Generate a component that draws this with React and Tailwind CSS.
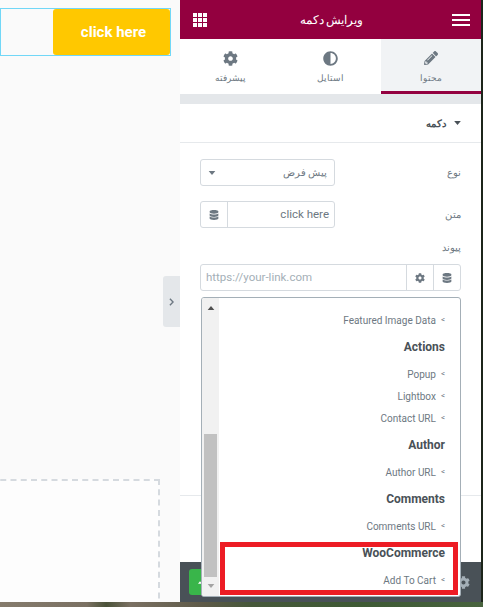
import React from 'react';
import { FaAdjust, FaCog, FaDatabase, FaPencilAlt } from 'react-icons/fa';

const font = { fontFamily: 'Roboto, sans-serif' };

function Tab({ label, active, children }) {
  return (
    <div className={`flex-1 h-[55px] flex flex-col items-center pt-[12px] ${active ? 'bg-[#f1f3f5] border-b-[3px] border-[#93003f]' : 'bg-white'}`}>
      <div className="h-[16px] text-[#6d7882]">{children}</div>
      <span className="mt-[5px] text-[8.5px] leading-[12px] text-[#6d7882]">{label}</span>
    </div>
  );
}

function Item({ children }) {
  return (
    <div className="h-[22px] flex items-center justify-end gap-[5px] text-[10px] text-[#6d7882]">
      <span>{children}</span>
      <span className="text-[8px] leading-none">&lt;</span>
    </div>
  );
}

function Group({ children }) {
  return <div className="h-[32px] flex items-center justify-end text-[12px] font-bold text-[#495157]">{children}</div>;
}

export default function App() {
  return (
    <div className="relative w-[483px] h-[607px] overflow-hidden flex bg-[#1e281c]" style={font}>
      {/* Preview */}
      <div className="w-[180px] h-[602px] shrink-0 bg-[#fafafa] relative overflow-hidden">
        <div className="mt-[8px] h-[48px] w-[171px] border border-[#71d7f7] flex justify-end">
          <div className="w-[117px] h-[46px] pl-[4px] bg-[#ffc800] rounded-[3px] flex items-center justify-center text-white text-[15px] font-bold">click here</div>
        </div>
        <div className="absolute left-[-10px] top-[479px] w-[170px] h-[140px] border-2 border-dashed border-[#d5dadf] bg-[#fdfdfd]" />
      </div>

      {/* Panel */}
      <div className="w-[301px] h-[602px] shrink-0 flex flex-col bg-white shadow-[0_0_8px_rgba(0,0,0,0.15)]">
        <div className="h-[39px] shrink-0 bg-[#93003f] flex items-center justify-between pl-[13px] pr-[11px] text-white">
          <div className="grid grid-cols-3 gap-[1px]">
            {Array.from({ length: 9 }).map((_, i) => <div key={i} className="w-[4px] h-[4px] bg-white" />)}
          </div>
          <span className="text-[12px] ml-[4px]" dir="rtl">ویرایش دکمه</span>
          <div className="flex flex-col gap-[3px]">
            <div className="w-[18px] h-[2px] bg-white" />
            <div className="w-[18px] h-[2px] bg-white" />
            <div className="w-[18px] h-[2px] bg-white" />
          </div>
        </div>
        <div className="flex shrink-0">
          <Tab label="پیشرفته"><FaCog size={15} /></Tab>
          <Tab label="استایل"><FaAdjust size={15} /></Tab>
          <Tab label="محتوا" active><FaPencilAlt size={14} /></Tab>
        </div>
        <div className="h-[10px] shrink-0 bg-[#e4e7ea]" />
        <div className="h-[39px] shrink-0 border-b border-[#e6e9ec] flex items-center justify-end gap-[8px] pr-[20px] text-[10px] font-bold text-[#495157]">
          <span dir="rtl">دکمه</span>
          <svg viewBox="0 0 10 6" className="w-[7px] h-[4px]" fill="currentColor"><path d="M0 0h10L5 6z" /></svg>
        </div>

        <div className="flex-1 px-[20px] pt-[16px]">
          <div className="flex items-center justify-between h-[27px]">
            <div className="w-[135px] h-[27px] border border-[#d5dadf] rounded-[3px] flex items-center justify-between px-[7px] text-[10px] text-[#6d7882]">
              <svg viewBox="0 0 10 6" className="w-[8px] h-[4px]" fill="currentColor"><path d="M0 0h10L5 6z" /></svg>
              <span dir="rtl">پیش فرض</span>
            </div>
            <span className="text-[10px] text-[#6d7882]" dir="rtl">نوع</span>
          </div>
          <div className="flex items-center justify-between h-[27px] mt-[15px]">
            <div className="w-[135px] h-[27px] border border-[#d5dadf] rounded-[3px] flex">
              <div className="w-[27px] border-r border-[#d5dadf] flex items-center justify-center text-[#6d7882]"><FaDatabase size={10} /></div>
              <div className="flex-1 flex items-center justify-end pr-[5px] text-[11.5px] text-[#6d7882]">click here</div>
            </div>
            <span className="text-[10px] text-[#6d7882]" dir="rtl">متن</span>
          </div>
          <div className="mt-[12px] h-[14px] flex justify-end text-[10px] text-[#6d7882]"><span dir="rtl">پیوند</span></div>
          <div className="mt-[10px] w-[261px] h-[27px] border border-[#d5dadf] rounded-[3px] flex">
            <div className="flex-1 flex items-center pl-[5px] pt-[1px] text-[11.5px] text-[#a4afb7]">https://your-link.com</div>
            <div className="w-[27px] border-l border-[#d5dadf] flex items-center justify-center text-[#6d7882]"><FaCog size={10} /></div>
            <div className="w-[27px] border-l border-[#d5dadf] flex items-center justify-center text-[#6d7882]"><FaDatabase size={10} /></div>
          </div>
          <div className="mt-[204px] -mx-[20px] border-t border-[#e6e9ec]" />
        </div>

        {/* Footer */}
        <div className="h-[40px] shrink-0 bg-[#495157] flex items-center justify-between pl-[9px] pr-[11px] text-[#a4afb7]">
          <div className="w-[30px] h-[26px] rounded-[3px] bg-[#39b54a] flex items-center pl-[9px]">
            <svg viewBox="0 0 6 4" className="w-[4px] h-[3px]" fill="#ffffff"><path d="M0 4h6L3 0z" /></svg>
          </div>
          <FaCog size={13} />
        </div>
      </div>

      {/* Dynamic tags dropdown */}
      <div className="absolute left-[201px] top-[297px] w-[260px] h-[300px] bg-white border border-[#a4afb7] rounded-[3px] overflow-hidden flex">
        <div className="w-[17px] h-full bg-[#f1f1f1] shrink-0 flex flex-col items-center py-[4px]">
          <svg viewBox="0 0 10 6" className="w-[8px] h-[4px] mt-[4px]" fill="#505050"><path d="M0 6h10L5 0z" /></svg>
          <div className="w-[13px] h-[143px] bg-[#c1c1c1] mt-auto" />
          <svg viewBox="0 0 10 6" className="w-[8px] h-[4px] mt-[7px] mb-[4px]" fill="#a3a3a3"><path d="M0 0h10L5 6z" /></svg>
        </div>
        <div className="flex-1 pr-[15px] pt-[11px]">
          <Item>Featured Image Data</Item>
          <Group>Actions</Group>
          <Item>Popup</Item>
          <Item>Lightbox</Item>
          <Item>Contact URL</Item>
          <Group>Author</Group>
          <Item>Author URL</Item>
          <Group>Comments</Group>
          <Item>Comments URL</Item>
          <Group>WooCommerce</Group>
          <Item>Add To Cart</Item>
        </div>
      </div>

      {/* Red highlight */}
      <div className="absolute left-[220px] top-[542px] w-[238px] h-[53px] border-[5px] border-[#ed1c24]" />

      {/* Collapse handle */}
      <div className="absolute left-[163px] top-[276px] w-[17px] h-[51px] bg-[#e4e7ea] rounded-l-[3px] flex items-center justify-center text-[#6d7882]">
        <svg viewBox="0 0 6 10" className="w-[5px] h-[8px]" fill="none" stroke="currentColor" strokeWidth="1.8"><path d="M1 1l4 4-4 4" /></svg>
      </div>

      {/* Desktop strip */}
      <div className="absolute left-0 right-0 bottom-0 h-[5px] bg-[linear-gradient(90deg,#857b6c_0%,#7a7062_18%,#4a5238_22%,#7a7062_27%,#5e5a48_42%,#46583a_52%,#3e5a34_75%,#48633e_100%)]" />
    </div>
  );
}
